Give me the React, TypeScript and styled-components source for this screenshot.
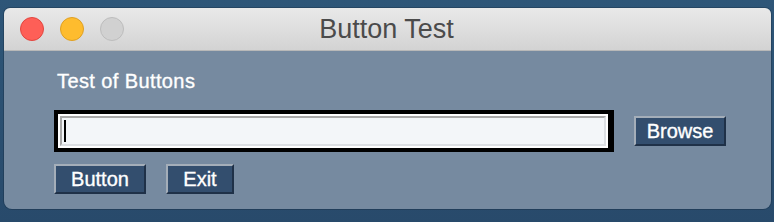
import React from 'react';
import styled, { createGlobalStyle } from 'styled-components';

const GlobalStyle = createGlobalStyle`
  html, body {
    margin: 0;
    padding: 0;
    height: 100%;
  }
  body {
    background: linear-gradient(180deg, #2e5678 0%, #284a6b 100%);
    font-family: "Liberation Sans", Arial, sans-serif;
    overflow: hidden;
  }
`;

const Desktop = styled.div`
  width: 774px;
  height: 222px;
  padding: 8px 3px 0 4px;
  box-sizing: border-box;
`;

const Window = styled.div`
  width: 767px;
  height: 201px;
  border-radius: 6px 6px 8px 8px;
  overflow: hidden;
  display: flex;
  flex-direction: column;
  box-shadow: 0 0 0 1px rgba(20, 40, 60, 0.35);
`;

const TitleBar = styled.div`
  height: 42px;
  flex: none;
  display: grid;
  grid-template-columns: 1fr auto 1fr;
  align-items: center;
  background: linear-gradient(180deg, #e9e9e9 0%, #d3d3d3 100%);
  border-bottom: 1px solid #b8b8b8;
  padding: 0 16px;
`;

const Lights = styled.div`
  display: flex;
  gap: 16px;
`;

const Light = styled.span<{ $fill: string; $edge: string }>`
  width: 24px;
  height: 24px;
  border-radius: 50%;
  box-sizing: border-box;
  background: ${({ $fill }) => $fill};
  border: 1px solid ${({ $edge }) => $edge};
`;

const Title = styled.div`
  font-size: 27px;
  color: #4b4b4b;
  line-height: 30px;
  margin-left: -2px;
`;

const Content = styled.div`
  flex: 1;
  background: #768aa0;
  padding: 19px 0 0 50px;
  display: flex;
  flex-direction: column;
`;

const Label = styled.div`
  color: #ffffff;
  font-size: 20px;
  line-height: 23px;
  margin-left: 3px;
  letter-spacing: 0.4px;
  -webkit-text-stroke: 0.35px #ffffff;
`;

const EntryRow = styled.div`
  display: flex;
  align-items: center;
  gap: 20px;
  margin-top: 17px;
`;

const Entry = styled.div`
  width: 560px;
  height: 42px;
  box-sizing: border-box;
  border: 4px solid #000000;
  border-right-width: 6px;
  background: #ffffff;
  padding: 2px;
  display: flex;
`;

const Field = styled.div`
  flex: 1;
  background: #f3f6f9;
  border-top: 2px solid #a9a9a9;
  border-left: 2px solid #a9a9a9;
  border-bottom: 2px solid #dcdfe3;
  border-right: 2px solid #dcdfe3;
  display: flex;
  align-items: center;
  padding-left: 2px;
`;

const Caret = styled.span`
  width: 2px;
  height: 22px;
  background: #000000;
`;

const ButtonRow = styled.div`
  display: flex;
  gap: 20px;
  margin-top: 12px;
`;

const TkButton = styled.button<{ $width: number }>`
  width: ${({ $width }) => $width}px;
  height: 30px;
  box-sizing: border-box;
  background: #334e6e;
  color: #ffffff;
  font-family: "Liberation Sans", Arial, sans-serif;
  font-size: 20px;
  line-height: 24px;
  padding: 0;
  -webkit-text-stroke: 0.35px #ffffff;
  border-top: 2px solid #a4aeb9;
  border-left: 2px solid #a4aeb9;
  border-bottom: 2px solid #1f3148;
  border-right: 2px solid #1f3148;
  border-radius: 0;
`;

export default function App() {
  return (
    <>
      <GlobalStyle />
      <Desktop>
        <Window>
          <TitleBar>
            <Lights>
              <Light $fill="#fe5f57" $edge="#e2463f" />
              <Light $fill="#febc2e" $edge="#dfa023" />
              <Light $fill="#d1d1d1" $edge="#bdbdbd" />
            </Lights>
            <Title>Button Test</Title>
            <div />
          </TitleBar>
          <Content>
            <Label>Test of Buttons</Label>
            <EntryRow>
              <Entry>
                <Field>
                  <Caret />
                </Field>
              </Entry>
              <TkButton $width={92}>Browse</TkButton>
            </EntryRow>
            <ButtonRow>
              <TkButton $width={92}>Button</TkButton>
              <TkButton $width={68}>Exit</TkButton>
            </ButtonRow>
          </Content>
        </Window>
      </Desktop>
    </>
  );
}
